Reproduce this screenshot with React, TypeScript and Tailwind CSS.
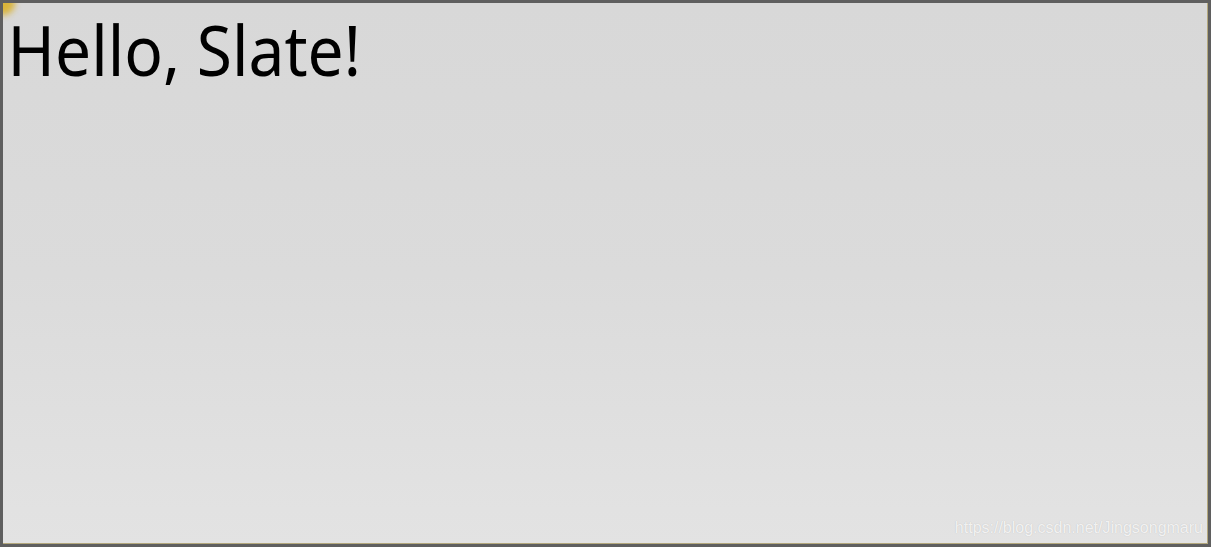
export default function App() {
	return (
		<div className="h-[547px] w-[1211px] bg-[#5f5f5f] p-[3px]">
			<div className="relative h-full w-full overflow-hidden border-r border-b border-[#b3a77c] bg-gradient-to-b from-[#d8d8d8] via-[#dbdbdb] to-[#e3e3e3]">
				<div className="pointer-events-none absolute -top-3 -left-3 h-6 w-6 rounded-full bg-[#d9b43a] blur-[3px]" />
				<h1 className="inline-block origin-left scale-x-[0.915] pl-[5px] pt-[6px] text-[70px] leading-[80px] text-black font-['Noto_Sans',sans-serif]">
					Hello, Slate!
				</h1>
				<span className="absolute right-[4px] bottom-[6px] text-[16px] leading-[18px] text-white/80 [text-shadow:0_0_1px_rgba(0,0,0,0.2)] font-['Liberation_Sans',Arial,sans-serif]">
					https://blog.csdn.net/Jingsongmaru
				</span>
			</div>
		</div>
	);
}
